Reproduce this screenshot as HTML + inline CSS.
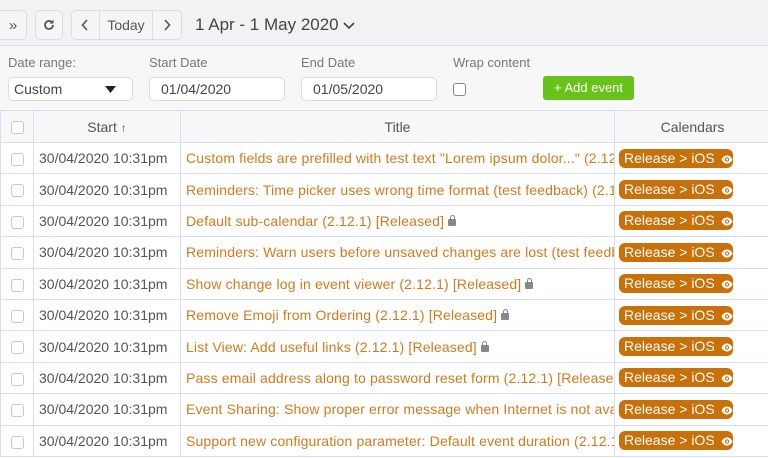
<!DOCTYPE html>
<html><head><meta charset="utf-8"><style>
*{box-sizing:border-box;margin:0;padding:0}
body{width:768px;height:458px;overflow:hidden;background:#fff;font-family:"Liberation Sans",sans-serif;font-size:14px;color:#555;position:relative}
.tb{position:absolute;left:0;top:0;width:768px;height:46px;background:#f1f2f4;border-bottom:1px solid #d6ddf5}
.btn{position:absolute;top:10px;height:30px;border:1px solid #dcdde0;border-radius:5px;background:#f5f5f6;color:#555;display:flex;align-items:center;justify-content:center}
.flt{position:absolute;left:0;top:46px;width:768px;height:64px;background:#f7f7f7}
.lbl{position:absolute;top:55px;font-size:13px;color:#777}
.inp{position:absolute;top:77px;height:24px;border:1px solid #dcdcdc;border-radius:5px;background:#fff;font-size:14px;color:#444;padding:3px 0 0 10px}
table{position:absolute;left:0;top:110px;border-collapse:collapse;width:770px;table-layout:fixed}
td,th{border:1px solid #d6ddf7;height:31.4px;white-space:nowrap;overflow:hidden;font-weight:normal}
th{height:32px;background:#f7f7f7;color:#555;font-size:14px}
.cb{display:inline-block;width:13px;height:13px;border:1px solid #c8c8c8;border-radius:3px;background:#fff;vertical-align:middle}
td.c0{text-align:center}
td.d{padding-left:5px;color:#555}
td.t{padding-left:5px;color:#d07a1e;text-overflow:clip;letter-spacing:.15px}
td.k{padding-left:4px}
.bd{display:inline-block;background:#c8700a;color:#fff;border-radius:6px;height:19px;line-height:19px;padding:0 6px 0 5px;font-size:14px;width:114px}
.bd svg{vertical-align:-1px;margin-left:2px}
.lk{display:inline-block;width:8px;height:7px;background:#888;border-radius:1px;position:relative;margin-left:4px;vertical-align:0}
.lk:before{content:"";position:absolute;left:1.5px;top:-4px;width:3px;height:4px;border:1px solid #888;border-bottom:none;border-radius:3px 3px 0 0}
</style></head><body>
<div class="tb">
 <div class="btn" style="left:-5px;width:32px;font-size:15px;padding-left:4px">»</div>
 <div class="btn" style="left:35px;width:28px"><svg width="14" height="14" viewBox="0 0 14 14"><path d="M11 7a4 4 0 1 1-1.2-2.9" fill="none" stroke="#555" stroke-width="1.8"/><path d="M11.5 1.5v4h-4z" fill="#555"/></svg></div>
 <div class="btn" style="left:71px;width:111px;justify-content:flex-start">
  <span style="width:28px;height:28px;border-right:1px solid #dcdde0;display:flex;align-items:center;justify-content:center"><svg width="8" height="12" viewBox="0 0 8 12"><path d="M6 1L1.5 6 6 11" fill="none" stroke="#555" stroke-width="1.6"/></svg></span>
  <span style="width:54px;text-align:center;border-right:1px solid #dcdde0;height:28px;line-height:28px;font-size:14px">Today</span>
  <span style="width:28px;height:28px;display:flex;align-items:center;justify-content:center"><svg width="8" height="12" viewBox="0 0 8 12"><path d="M2 1l4.5 5L2 11" fill="none" stroke="#555" stroke-width="1.6"/></svg></span>
 </div>
 <div style="position:absolute;left:195px;top:15px;font-size:17px;color:#444">1 Apr - 1 May 2020 <svg width="12" height="8" viewBox="0 0 12 8"><path d="M1 1l5 5 5-5" fill="none" stroke="#444" stroke-width="1.6"/></svg></div>
</div>
<div class="flt"></div>
<div class="lbl" style="left:8px">Date range:</div>
<div class="lbl" style="left:149px">Start Date</div>
<div class="lbl" style="left:301px">End Date</div>
<div class="lbl" style="left:453px">Wrap content</div>
<div class="inp" style="left:8px;width:125px;padding-left:5px">Custom<svg style="position:absolute;left:96px;top:8px" width="11" height="7" viewBox="0 0 11 7"><path d="M0 0h11L5.5 7z" fill="#222"/></svg></div>
<div class="inp" style="left:149px;width:136px;padding-left:11px">01/04/2020</div>
<div class="inp" style="left:301px;width:136px;padding-left:11px">01/05/2020</div>
<span class="cb" style="position:absolute;left:453px;top:83px;border-color:#888"></span>
<div style="position:absolute;left:543px;top:76px;width:91px;height:24px;background:#67c21a;border-radius:3px;color:#fff;font-size:13px;text-align:center;line-height:24px">+ Add event</div>
<table>
<colgroup><col style="width:33px"><col style="width:147px"><col style="width:434px"><col style="width:156px"></colgroup>
<tr><th><span class="cb"></span></th><th>Start <span style="font-size:12px">&#8593;</span></th><th>Title</th><th>Calendars</th></tr>
<tr><td class="c0"><span class="cb"></span></td><td class="d">30/04/2020 10:31pm</td><td class="t">Custom fields are prefilled with test text "Lorem ipsum dolor..." (2.12.1)</td><td class="k"><span class="bd">Release &gt; iOS <svg width="12" height="9" viewBox="0 0 12 9"><path d="M0.5 4.5C2 1.5 4 .5 6 .5s4 1 5.5 4C10 7.5 8 8.5 6 8.5S2 7.5.5 4.5z" fill="#fff"/><circle cx="6" cy="4.5" r="2.2" fill="#c8700a"/><circle cx="6" cy="4.5" r="1.1" fill="#fff"/></svg></span></td></tr>
<tr><td class="c0"><span class="cb"></span></td><td class="d">30/04/2020 10:31pm</td><td class="t">Reminders: Time picker uses wrong time format (test feedback) (2.12.1)</td><td class="k"><span class="bd">Release &gt; iOS <svg width="12" height="9" viewBox="0 0 12 9"><path d="M0.5 4.5C2 1.5 4 .5 6 .5s4 1 5.5 4C10 7.5 8 8.5 6 8.5S2 7.5.5 4.5z" fill="#fff"/><circle cx="6" cy="4.5" r="2.2" fill="#c8700a"/><circle cx="6" cy="4.5" r="1.1" fill="#fff"/></svg></span></td></tr>
<tr><td class="c0"><span class="cb"></span></td><td class="d">30/04/2020 10:31pm</td><td class="t">Default sub-calendar (2.12.1) [Released]<span class="lk"></span></td><td class="k"><span class="bd">Release &gt; iOS <svg width="12" height="9" viewBox="0 0 12 9"><path d="M0.5 4.5C2 1.5 4 .5 6 .5s4 1 5.5 4C10 7.5 8 8.5 6 8.5S2 7.5.5 4.5z" fill="#fff"/><circle cx="6" cy="4.5" r="2.2" fill="#c8700a"/><circle cx="6" cy="4.5" r="1.1" fill="#fff"/></svg></span></td></tr>
<tr><td class="c0"><span class="cb"></span></td><td class="d">30/04/2020 10:31pm</td><td class="t">Reminders: Warn users before unsaved changes are lost (test feedback)</td><td class="k"><span class="bd">Release &gt; iOS <svg width="12" height="9" viewBox="0 0 12 9"><path d="M0.5 4.5C2 1.5 4 .5 6 .5s4 1 5.5 4C10 7.5 8 8.5 6 8.5S2 7.5.5 4.5z" fill="#fff"/><circle cx="6" cy="4.5" r="2.2" fill="#c8700a"/><circle cx="6" cy="4.5" r="1.1" fill="#fff"/></svg></span></td></tr>
<tr><td class="c0"><span class="cb"></span></td><td class="d">30/04/2020 10:31pm</td><td class="t">Show change log in event viewer (2.12.1) [Released]<span class="lk"></span></td><td class="k"><span class="bd">Release &gt; iOS <svg width="12" height="9" viewBox="0 0 12 9"><path d="M0.5 4.5C2 1.5 4 .5 6 .5s4 1 5.5 4C10 7.5 8 8.5 6 8.5S2 7.5.5 4.5z" fill="#fff"/><circle cx="6" cy="4.5" r="2.2" fill="#c8700a"/><circle cx="6" cy="4.5" r="1.1" fill="#fff"/></svg></span></td></tr>
<tr><td class="c0"><span class="cb"></span></td><td class="d">30/04/2020 10:31pm</td><td class="t">Remove Emoji from Ordering (2.12.1) [Released]<span class="lk"></span></td><td class="k"><span class="bd">Release &gt; iOS <svg width="12" height="9" viewBox="0 0 12 9"><path d="M0.5 4.5C2 1.5 4 .5 6 .5s4 1 5.5 4C10 7.5 8 8.5 6 8.5S2 7.5.5 4.5z" fill="#fff"/><circle cx="6" cy="4.5" r="2.2" fill="#c8700a"/><circle cx="6" cy="4.5" r="1.1" fill="#fff"/></svg></span></td></tr>
<tr><td class="c0"><span class="cb"></span></td><td class="d">30/04/2020 10:31pm</td><td class="t">List View: Add useful links (2.12.1) [Released]<span class="lk"></span></td><td class="k"><span class="bd">Release &gt; iOS <svg width="12" height="9" viewBox="0 0 12 9"><path d="M0.5 4.5C2 1.5 4 .5 6 .5s4 1 5.5 4C10 7.5 8 8.5 6 8.5S2 7.5.5 4.5z" fill="#fff"/><circle cx="6" cy="4.5" r="2.2" fill="#c8700a"/><circle cx="6" cy="4.5" r="1.1" fill="#fff"/></svg></span></td></tr>
<tr><td class="c0"><span class="cb"></span></td><td class="d">30/04/2020 10:31pm</td><td class="t">Pass email address along to password reset form (2.12.1) [Released]</td><td class="k"><span class="bd">Release &gt; iOS <svg width="12" height="9" viewBox="0 0 12 9"><path d="M0.5 4.5C2 1.5 4 .5 6 .5s4 1 5.5 4C10 7.5 8 8.5 6 8.5S2 7.5.5 4.5z" fill="#fff"/><circle cx="6" cy="4.5" r="2.2" fill="#c8700a"/><circle cx="6" cy="4.5" r="1.1" fill="#fff"/></svg></span></td></tr>
<tr><td class="c0"><span class="cb"></span></td><td class="d">30/04/2020 10:31pm</td><td class="t">Event Sharing: Show proper error message when Internet is not available</td><td class="k"><span class="bd">Release &gt; iOS <svg width="12" height="9" viewBox="0 0 12 9"><path d="M0.5 4.5C2 1.5 4 .5 6 .5s4 1 5.5 4C10 7.5 8 8.5 6 8.5S2 7.5.5 4.5z" fill="#fff"/><circle cx="6" cy="4.5" r="2.2" fill="#c8700a"/><circle cx="6" cy="4.5" r="1.1" fill="#fff"/></svg></span></td></tr>
<tr><td class="c0"><span class="cb"></span></td><td class="d">30/04/2020 10:31pm</td><td class="t">Support new configuration parameter: Default event duration (2.12.1)</td><td class="k"><span class="bd">Release &gt; iOS <svg width="12" height="9" viewBox="0 0 12 9"><path d="M0.5 4.5C2 1.5 4 .5 6 .5s4 1 5.5 4C10 7.5 8 8.5 6 8.5S2 7.5.5 4.5z" fill="#fff"/><circle cx="6" cy="4.5" r="2.2" fill="#c8700a"/><circle cx="6" cy="4.5" r="1.1" fill="#fff"/></svg></span></td></tr>
</table>
</body></html>
